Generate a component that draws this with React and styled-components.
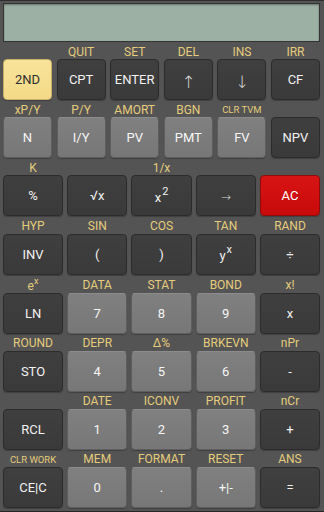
import React from "react";
import styled, { createGlobalStyle, css } from "styled-components";

const GlobalStyle = createGlobalStyle`
  html, body { margin: 0; padding: 0; background: #545454; }
  * { box-sizing: border-box; }
`;

const Calc = styled.div`
  width: 324px;
  height: 512px;
  padding: 2px 4px 3px 3px;
  background: #545454;
  border-top: 1px solid #2e2e2e;
  border-bottom: 1px solid #262626;
  display: grid;
  grid-template-rows: 39px repeat(8, 1fr);
  font-family: Roboto, "Liberation Sans", sans-serif;
`;

const Display = styled.div`
  background: #9cb0a4;
  border: 1px solid #343434;
  box-shadow: inset 0 1px 2px rgba(0, 0, 0, 0.35);
`;

const Row = styled.div`
  display: grid;
  grid-template-columns: repeat(${(p) => p.$cols}, 1fr);
  column-gap: ${(p) => (p.$cols === 6 ? "4.6px" : "4.2px")};
`;

const Cell = styled.div`
  display: flex;
  flex-direction: column;
  min-width: 0;
`;

const Label = styled.div`
  flex: 1;
  display: flex;
  align-items: center;
  justify-content: center;
  padding-top: 2px;
  color: #e4cc7c;
  font-size: ${(p) => (p.$small ? "9.5px" : "12px")};
  white-space: nowrap;
  sup { font-size: 9px; position: relative; top: -1px; }
`;

const variants = {
  dark: css`
    background: linear-gradient(#3f3f3f, #3a3a3a);
    border: 1px solid #2c2c2c;
    color: #f2f2f2;
  `,
  gray: css`
    background: linear-gradient(#808080, #777777);
    border: 1px solid #5e5e5e;
    border-top-color: #8c8c8c;
    color: #f6f6f6;
  `,
  yellow: css`
    background: linear-gradient(#f8e39a, #f3da88);
    border: 1px solid #c8b068;
    color: #2e2e2e;
  `,
  red: css`
    background: linear-gradient(#d81414, #c80a0a);
    border: 1px solid #8e0c0c;
    color: #ffffff;
  `,
};

const Key = styled.div`
  height: 41px;
  border-radius: 4px;
  display: flex;
  align-items: center;
  justify-content: center;
  font-size: 13px;
  box-shadow: 0 1px 1px rgba(0, 0, 0, 0.25);
  ${(p) => variants[p.$v]}
  sup { font-size: 11px; position: relative; top: -2px; margin-left: 1px; }
`;

const Arrow = styled.span`
  font-family: "DejaVu Sans", sans-serif;
  font-size: ${(p) => (p.$v ? "17px" : "12px")};
  font-weight: 300;
  color: #d8d8d8;
  position: relative;
  top: ${(p) => (p.$v ? "2px" : "1px")};
`;

const X2 = () => (<span>x<sup>2</sup></span>);
const YX = () => (<span>y<sup>x</sup></span>);
const EX = () => (<span>e<sup>x</sup></span>);

const rows = [
  { cols: 6, cells: [
    ["", "2ND", "yellow"], ["QUIT", "CPT", "dark"], ["SET", "ENTER", "dark"],
    ["DEL", <Arrow $v>↑</Arrow>, "dark"], ["INS", <Arrow $v>↓</Arrow>, "dark"], ["IRR", "CF", "dark"],
  ]},
  { cols: 6, cells: [
    ["xP/Y", "N", "gray"], ["P/Y", "I/Y", "gray"], ["AMORT", "PV", "gray"],
    ["BGN", "PMT", "gray"], ["CLR TVM", "FV", "gray", true], ["", "NPV", "dark"],
  ]},
  { cols: 5, cells: [
    ["K", "%", "dark"], ["", "√x", "dark"], ["1/x", <X2 />, "dark"],
    ["", <Arrow>→</Arrow>, "dark"], ["", "AC", "red"],
  ]},
  { cols: 5, cells: [
    ["HYP", "INV", "dark"], ["SIN", "(", "dark"], ["COS", ")", "dark"],
    ["TAN", <YX />, "dark"], ["RAND", "÷", "dark"],
  ]},
  { cols: 5, cells: [
    [<EX />, "LN", "dark"], ["DATA", "7", "gray"], ["STAT", "8", "gray"],
    ["BOND", "9", "gray"], ["x!", "x", "dark"],
  ]},
  { cols: 5, cells: [
    ["ROUND", "STO", "dark"], ["DEPR", "4", "gray"], ["Δ%", "5", "gray"],
    ["BRKEVN", "6", "gray"], ["nPr", "-", "dark"],
  ]},
  { cols: 5, cells: [
    ["", "RCL", "dark"], ["DATE", "1", "gray"], ["ICONV", "2", "gray"],
    ["PROFIT", "3", "gray"], ["nCr", "+", "dark"],
  ]},
  { cols: 5, cells: [
    ["CLR WORK", "CE|C", "dark", true], ["MEM", "0", "gray"], ["FORMAT", ".", "gray"],
    ["RESET", "+|-", "gray"], ["ANS", "=", "dark"],
  ]},
];

export default function App() {
  return (
    <>
      <GlobalStyle />
      <Calc>
        <Display />
        {rows.map((r, i) => (
          <Row key={i} $cols={r.cols}>
            {r.cells.map(([label, text, v, small], j) => (
              <Cell key={j}>
                <Label $small={small}>{label}</Label>
                <Key $v={v}>{text}</Key>
              </Cell>
            ))}
          </Row>
        ))}
      </Calc>
    </>
  );
}
